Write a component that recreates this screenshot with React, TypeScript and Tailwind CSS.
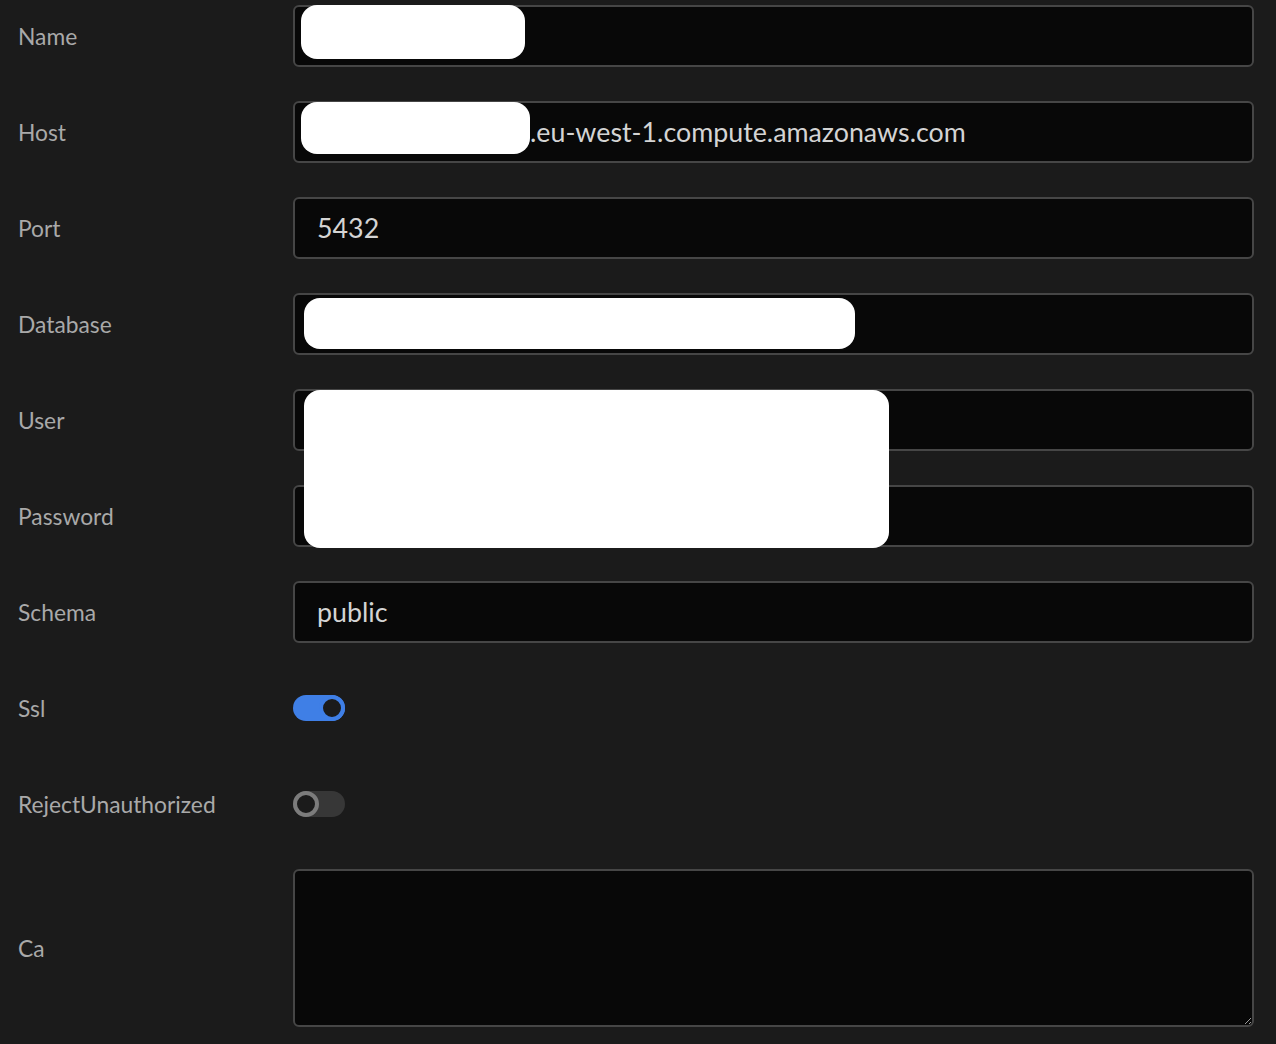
import React from "react";

const font = { fontFamily: "Lato, 'Noto Sans', sans-serif" };

function Label({ children }: { children: React.ReactNode }) {
  return (
    <div className="w-[293px] shrink-0 pl-[18px] text-[22.8px] text-[#a9a9a9]">
      {children}
    </div>
  );
}

function Field({
  children,
  redact,
}: {
  children?: React.ReactNode;
  redact?: string;
}) {
  return (
    <div className="relative flex h-[62px] flex-1 items-center rounded-[6px] border-2 border-[#464646] bg-[#080808] pl-[22px] text-[26.8px] text-[#d4d4d4]">
      {children}
      {redact ? <div className={redact} /> : null}
    </div>
  );
}

function Toggle({ on }: { on: boolean }) {
  return on ? (
    <div className="flex h-[26px] w-[52px] items-center justify-end rounded-full bg-[#3f7fe6]">
      <div className="h-[26px] w-[26px] rounded-full border-[4px] border-[#3f7fe6] bg-[#1b1b1b]" />
    </div>
  ) : (
    <div className="flex h-[26px] w-[52px] items-center rounded-full bg-[#373737]">
      <div className="h-[26px] w-[26px] rounded-full border-[4px] border-[#7c7c7c] bg-[#1b1b1b]" />
    </div>
  );
}

export default function App() {
  return (
    <div className="min-h-screen w-full bg-[#1b1b1b]" style={font}>
      <div className="relative flex flex-col gap-[34px] pt-[5px] pr-[22px]">
        <div className="flex items-center">
          <Label>Name</Label>
          <Field redact="absolute left-[6px] top-[-2px] h-[54px] w-[224px] rounded-[16px] bg-white" />
        </div>
        <div className="flex items-center">
          <Label>Host</Label>
          <Field redact="absolute left-[6px] top-[-1px] h-[52px] w-[229px] rounded-[16px] bg-white">
            <span className="inline-block w-[213px] shrink-0" />
            <span>.eu-west-1.compute.amazonaws.com</span>
          </Field>
        </div>
        <div className="flex items-center">
          <Label>Port</Label>
          <Field>5432</Field>
        </div>
        <div className="flex items-center">
          <Label>Database</Label>
          <Field redact="absolute left-[9px] top-[3px] h-[51px] w-[551px] rounded-[16px] bg-white" />
        </div>
        <div className="flex items-center">
          <Label>User</Label>
          <Field />
        </div>
        <div className="flex items-center">
          <Label>Password</Label>
          <Field />
        </div>
        <div className="flex items-center">
          <Label>Schema</Label>
          <Field>public</Field>
        </div>
        <div className="flex h-[62px] items-center">
          <Label>Ssl</Label>
          <Toggle on />
        </div>
        <div className="flex h-[62px] items-center">
          <Label>RejectUnauthorized</Label>
          <Toggle on={false} />
        </div>
        <div className="flex items-center pb-[17px]">
          <Label>Ca</Label>
          <textarea className="h-[158px] flex-1 rounded-[6px] border-2 border-[#464646] bg-[#080808] text-[#d2d2d2] outline-none" />
        </div>
        <div className="absolute left-[304px] top-[390px] h-[158px] w-[585px] rounded-[16px] bg-white" />
      </div>
    </div>
  );
}
